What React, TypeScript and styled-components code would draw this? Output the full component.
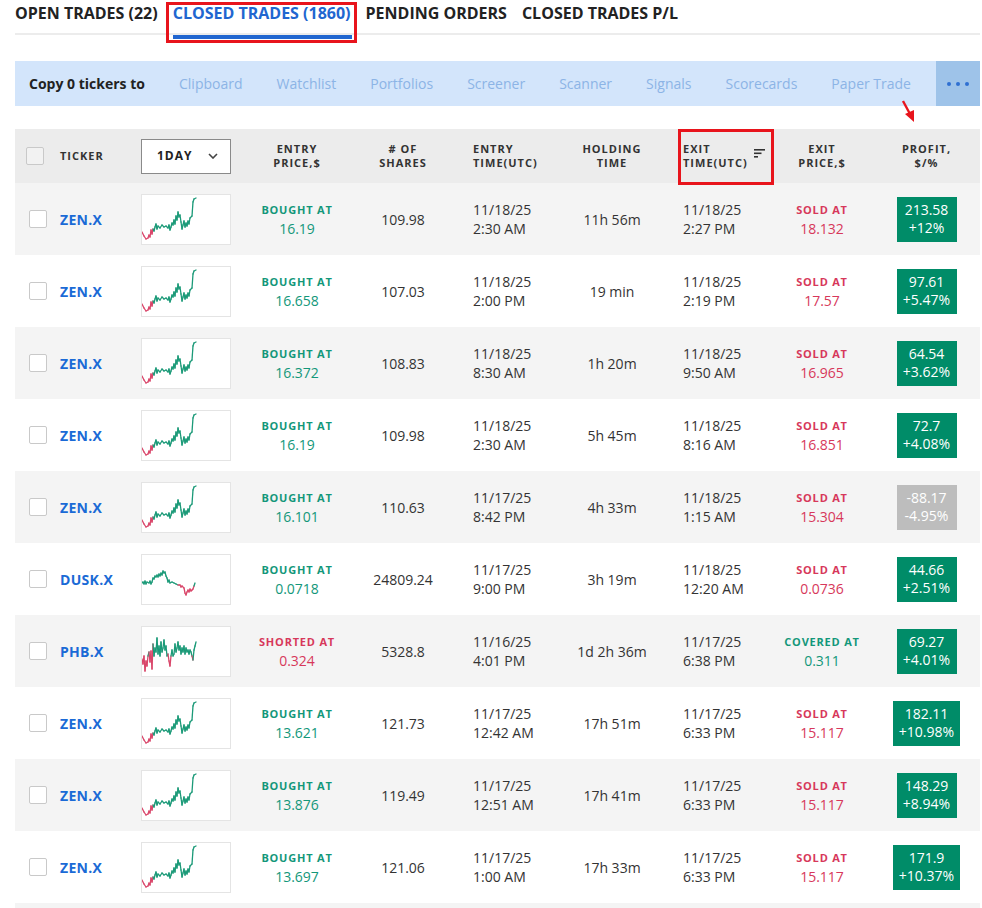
import React from 'react'
import styled, { createGlobalStyle } from 'styled-components'

const GlobalStyle = createGlobalStyle`
    body {
        margin: 0;
        background: #fff;
        font-family: "Open Sans", "Noto Sans", sans-serif;
        color: #333;
    }
`

const green = '#13977a'
const red = '#d7385b'
const blue = '#1a6ad6'

const Page = styled.div`
    width: 965px;
    padding: 0 0 0 15px;
    overflow: hidden;
    height: 908px;
    position: relative;
`

const TabBar = styled.nav`
    display: flex;
    gap: 15px;
    height: 33px;
    border-bottom: 2px solid #ececec;
`

const Tab = styled.div<{ active?: boolean }>`
    position: relative;
    padding-top: 2px;
    font-size: 16px;
    font-weight: 700;
    color: ${p => (p.active ? '#2166d0' : '#222')};
    white-space: nowrap;
    &::after {
        content: '';
        display: ${p => (p.active ? 'block' : 'none')};
        position: absolute;
        left: 0;
        right: -1px;
        bottom: -6px;
        height: 4px;
        background: #2166d0;
    }
`

const RedBox = styled.span<{ l: number; r: number; t: number; b: number }>`
    position: absolute;
    left: ${p => p.l}px;
    right: ${p => p.r}px;
    top: ${p => p.t}px;
    bottom: ${p => p.b}px;
    border: 3px solid #e8141c;
    pointer-events: none;
`

const CopyBar = styled.div`
    display: flex;
    align-items: center;
    margin-top: 26px;
    height: 45px;
    background: #d3e5fb;
`

const CopyLabel = styled.div`
    font-size: 14px;
    font-weight: 700;
    color: #222;
    padding-left: 14px;
    width: 150px;
`

const CopyLinks = styled.div`
    flex: 1;
    display: flex;
    justify-content: space-between;
    padding: 0 25px 0 0;
`

const CopyLink = styled.a`
    font-size: 14px;
    color: #8cb4e6;
    cursor: pointer;
`

const MoreButton = styled.div`
    width: 44px;
    height: 100%;
    background: #9ec3e9;
    display: flex;
    align-items: center;
    justify-content: center;
    gap: 5px;
    span {
        width: 4px;
        height: 4px;
        border-radius: 50%;
        background: #2f6fd1;
    }
`

const Table = styled.div`
    margin-top: 23px;
    position: relative;
`

const cols = '38px 88px 100px 112px 100px 110px 98px 110px 102px 107px'

const HeadRow = styled.div`
    display: grid;
    grid-template-columns: ${cols};
    height: 54px;
    background: #ececec;
    align-items: center;
`

const HeadCell = styled.div<{ left?: boolean; pad?: number }>`
    position: relative;
    height: 100%;
    display: flex;
    align-items: center;
    justify-content: ${p => (p.left ? 'flex-start' : 'center')};
    padding-left: ${p => p.pad || 0}px;
    text-align: ${p => (p.left ? 'left' : 'center')};
    font-size: 11px;
    font-weight: 700;
    letter-spacing: 1px;
    line-height: 14px;
    color: #333;
    box-sizing: border-box;
`

const Row = styled.div<{ shaded: boolean }>`
    display: grid;
    grid-template-columns: ${cols};
    height: 72px;
    align-items: center;
    background: ${p => (p.shaded ? '#f4f4f4' : '#fff')};
`

const Cell = styled.div<{ left?: boolean; pad?: number }>`
    text-align: ${p => (p.left ? 'left' : 'center')};
    padding-left: ${p => p.pad || 0}px;
    font-size: 14px;
    line-height: 19px;
    color: #333;
`

const CheckBox = styled.div<{ head?: boolean }>`
    width: 16px;
    height: 16px;
    border: 1px solid #c9c9c9;
    border-radius: 2px;
    background: ${p => (p.head ? '#f2f2f2' : '#fff')};
    margin-left: ${p => (p.head ? 11 : 14)}px;
`

const Ticker = styled.a`
    font-size: 14px;
    font-weight: 700;
    color: ${blue};
    padding-left: 7px;
    letter-spacing: 0.3px;
`

const HeadLabel = styled.span`
    padding-left: 7px;
`

const RangeSelect = styled.div`
    width: 90px;
    height: 35px;
    box-sizing: border-box;
    border: 1px solid #8a8a8a;
    background: #fff;
    display: flex;
    align-items: center;
    justify-content: space-between;
    padding: 0 12px 0 15px;
    font-size: 12px;
    font-weight: 700;
    color: #222;
`

const ChartBox = styled.div`
    width: 90px;
    height: 51px;
    box-sizing: border-box;
    border: 1px solid #e4e4e4;
    background: #fff;
    svg {
        display: block;
    }
`

const Tag = styled.div<{ color: string }>`
    font-size: 11px;
    font-weight: 700;
    letter-spacing: 0.8px;
    color: ${p => p.color};
    line-height: 18px;
`

const Price = styled.div<{ color: string }>`
    font-size: 14px;
    color: ${p => p.color};
    line-height: 19px;
`

const Badge = styled.div<{ loss?: boolean }>`
    display: inline-flex;
    flex-direction: column;
    justify-content: center;
    min-width: 60px;
    height: 45px;
    padding: 0 6px;
    box-sizing: border-box;
    background: ${p => (p.loss ? '#bdbdbd' : '#008c68')};
    color: #fff;
    font-size: 14px;
    line-height: 18px;
    text-align: center;
`

const Arrow = styled.svg`
    position: absolute;
    left: 899px;
    top: 99px;
`

type Series = number[][]

const zen: Series = [[1,38],[3,42],[5,45],[7,44],[8,41],[9,43],[10,36],[11,40],[12,35],[13,37],[14,33],[15,30],[16,35],[17,32],[19,34],[21,31],[23,33],[25,32],[27,34],[28,31],[29,36],[30,33],[31,29],[32,31],[33,26],[34,30],[35,22],[36,26],[37,18],[38,23],[39,21],[40,28],[41,35],[42,31],[43,27],[44,33],[45,29],[46,32],[47,27],[48,30],[49,24],[51,22],[52,8],[53,5],[55,4]]
const dusk: Series = [[1,29],[2,28],[3,30],[4,27],[5,30],[6,28],[8,29],[9,27],[10,30],[11,28],[12,24],[13,25],[14,22],[15,23],[16,21],[17,23],[18,20],[19,22],[20,19],[21,21],[22,17],[23,19],[24,18],[25,22],[26,24],[27,28],[28,26],[29,29],[31,28],[33,29],[35,30],[37,31],[39,31],[40,33],[41,32],[43,34],[44,39],[45,41],[46,38],[47,36],[48,38],[49,35],[50,37],[51,36],[52,35],[53,32],[54,29]]
const phb: Series = [[1,33],[2,38],[3,30],[4,45],[5,35],[6,40],[7,30],[8,26],[9,36],[10,25],[11,43],[12,18],[13,30],[14,22],[15,26],[16,12],[17,28],[18,20],[19,30],[20,16],[21,26],[22,22],[23,14],[24,24],[25,20],[26,30],[27,28],[28,35],[29,40],[30,30],[31,24],[32,30],[33,28],[34,18],[35,26],[36,22],[37,16],[38,24],[39,20],[40,28],[41,22],[42,26],[43,20],[44,28],[45,22],[46,26],[47,24],[48,28],[49,24],[50,26],[51,30],[52,34],[53,24],[54,20],[55,16]]

const Spark: React.FC<{ data: Series; level: number }> = ({ data, level }) => (
    <svg width="88" height="49" viewBox="1 1 88 49">
        {data.slice(1).map((p, i) => {
            const prev = data[i]
            const below = (prev[1] + p[1]) / 2 > level
            return (
                <line
                    key={i}
                    x1={prev[0]}
                    y1={prev[1]}
                    x2={p[0]}
                    y2={p[1]}
                    stroke={below ? '#d9466a' : '#1b9a78'}
                    strokeWidth="1.3"
                    strokeLinecap="round"
                />
            )
        })}
    </svg>
)

interface Trade {
    ticker: string
    chart: Series
    level: number
    short?: boolean
    entry: string
    shares: string
    entryDate: string
    entryTime: string
    holding: string
    exitDate: string
    exitTime: string
    exit: string
    profit: string
    pct: string
    loss?: boolean
}

const trades: Trade[] = [
    { ticker: 'ZEN.X', chart: zen, level: 36.5, entry: '16.19', shares: '109.98', entryDate: '11/18/25', entryTime: '2:30 AM', holding: '11h 56m', exitDate: '11/18/25', exitTime: '2:27 PM', exit: '18.132', profit: '213.58', pct: '+12%' },
    { ticker: 'ZEN.X', chart: zen, level: 36.5, entry: '16.658', shares: '107.03', entryDate: '11/18/25', entryTime: '2:00 PM', holding: '19 min', exitDate: '11/18/25', exitTime: '2:19 PM', exit: '17.57', profit: '97.61', pct: '+5.47%' },
    { ticker: 'ZEN.X', chart: zen, level: 36.5, entry: '16.372', shares: '108.83', entryDate: '11/18/25', entryTime: '8:30 AM', holding: '1h 20m', exitDate: '11/18/25', exitTime: '9:50 AM', exit: '16.965', profit: '64.54', pct: '+3.62%' },
    { ticker: 'ZEN.X', chart: zen, level: 36.5, entry: '16.19', shares: '109.98', entryDate: '11/18/25', entryTime: '2:30 AM', holding: '5h 45m', exitDate: '11/18/25', exitTime: '8:16 AM', exit: '16.851', profit: '72.7', pct: '+4.08%' },
    { ticker: 'ZEN.X', chart: zen, level: 36.5, entry: '16.101', shares: '110.63', entryDate: '11/17/25', entryTime: '8:42 PM', holding: '4h 33m', exitDate: '11/18/25', exitTime: '1:15 AM', exit: '15.304', profit: '-88.17', pct: '-4.95%', loss: true },
    { ticker: 'DUSK.X', chart: dusk, level: 30.5, entry: '0.0718', shares: '24809.24', entryDate: '11/17/25', entryTime: '9:00 PM', holding: '3h 19m', exitDate: '11/18/25', exitTime: '12:20 AM', exit: '0.0736', profit: '44.66', pct: '+2.51%' },
    { ticker: 'PHB.X', chart: phb, level: 30, short: true, entry: '0.324', shares: '5328.8', entryDate: '11/16/25', entryTime: '4:01 PM', holding: '1d 2h 36m', exitDate: '11/17/25', exitTime: '6:38 PM', exit: '0.311', profit: '69.27', pct: '+4.01%' },
    { ticker: 'ZEN.X', chart: zen, level: 36.5, entry: '13.621', shares: '121.73', entryDate: '11/17/25', entryTime: '12:42 AM', holding: '17h 51m', exitDate: '11/17/25', exitTime: '6:33 PM', exit: '15.117', profit: '182.11', pct: '+10.98%' },
    { ticker: 'ZEN.X', chart: zen, level: 36.5, entry: '13.876', shares: '119.49', entryDate: '11/17/25', entryTime: '12:51 AM', holding: '17h 41m', exitDate: '11/17/25', exitTime: '6:33 PM', exit: '15.117', profit: '148.29', pct: '+8.94%' },
    { ticker: 'ZEN.X', chart: zen, level: 36.5, entry: '13.697', shares: '121.06', entryDate: '11/17/25', entryTime: '1:00 AM', holding: '17h 33m', exitDate: '11/17/25', exitTime: '6:33 PM', exit: '15.117', profit: '171.9', pct: '+10.37%' },
]

const copyTargets = ['Clipboard', 'Watchlist', 'Portfolios', 'Screener', 'Scanner', 'Signals', 'Scorecards', 'Paper Trade']

export default function App() {
    return (
        <>
            <GlobalStyle />
            <Page>
                <TabBar>
                    <Tab>OPEN TRADES (22)</Tab>
                    <Tab active>
                        CLOSED TRADES (1860)
                        <RedBox l={-7} r={-6} t={2} b={-10} />
                    </Tab>
                    <Tab>PENDING ORDERS</Tab>
                    <Tab>CLOSED TRADES P/L</Tab>
                </TabBar>

                <CopyBar>
                    <CopyLabel>Copy 0 tickers to</CopyLabel>
                    <CopyLinks>
                        {copyTargets.map(t => (
                            <CopyLink key={t}>{t}</CopyLink>
                        ))}
                    </CopyLinks>
                    <MoreButton>
                        <span />
                        <span />
                        <span />
                    </MoreButton>
                </CopyBar>

                <Arrow width="20" height="26" viewBox="0 0 20 26">
                    <line x1="4" y1="2" x2="11" y2="15" stroke="#e8141c" strokeWidth="2.4" />
                    <polygon points="6,15 15,11 15,23" fill="#e8141c" />
                </Arrow>

                <Table>
                    <HeadRow>
                        <HeadCell left>
                            <CheckBox head />
                        </HeadCell>
                        <HeadCell left>
                            <HeadLabel>TICKER</HeadLabel>
                        </HeadCell>
                        <HeadCell left>
                            <RangeSelect>
                                1DAY
                                <svg width="10" height="6" viewBox="0 0 10 6">
                                    <polyline points="1,1 5,5 9,1" fill="none" stroke="#444" strokeWidth="1.6" />
                                </svg>
                            </RangeSelect>
                        </HeadCell>
                        <HeadCell>ENTRY<br />PRICE,$</HeadCell>
                        <HeadCell># OF<br />SHARES</HeadCell>
                        <HeadCell left pad={20}>ENTRY<br />TIME(UTC)</HeadCell>
                        <HeadCell>HOLDING<br />TIME</HeadCell>
                        <HeadCell left pad={22}>
                            <span>EXIT<br />TIME(UTC)</span>
                            <svg width="12" height="9" viewBox="0 0 12 9" style={{ marginLeft: 6, marginTop: -6 }}>
                                <rect x="0" y="0" width="11" height="1.6" fill="#333" />
                                <rect x="0" y="3.5" width="7.5" height="1.6" fill="#333" />
                                <rect x="0" y="7" width="4" height="1.6" fill="#333" />
                            </svg>
                            <RedBox l={17} r={-3} t={0} b={-2} />
                        </HeadCell>
                        <HeadCell>EXIT<br />PRICE,$</HeadCell>
                        <HeadCell>PROFIT,<br />$/%</HeadCell>
                    </HeadRow>

                    {trades.map((t, i) => (
                        <Row key={i} shaded={i % 2 === 0}>
                            <div>
                                <CheckBox />
                            </div>
                            <Ticker>{t.ticker}</Ticker>
                            <ChartBox>
                                <Spark data={t.chart} level={t.level} />
                            </ChartBox>
                            <Cell>
                                <Tag color={t.short ? red : green}>{t.short ? 'SHORTED AT' : 'BOUGHT AT'}</Tag>
                                <Price color={t.short ? red : green}>{t.entry}</Price>
                            </Cell>
                            <Cell>{t.shares}</Cell>
                            <Cell left pad={20}>
                                {t.entryDate}
                                <br />
                                {t.entryTime}
                            </Cell>
                            <Cell>{t.holding}</Cell>
                            <Cell left pad={22}>
                                {t.exitDate}
                                <br />
                                {t.exitTime}
                            </Cell>
                            <Cell>
                                <Tag color={t.short ? green : red}>{t.short ? 'COVERED AT' : 'SOLD AT'}</Tag>
                                <Price color={t.short ? green : red}>{t.exit}</Price>
                            </Cell>
                            <Cell>
                                <Badge loss={t.loss}>
                                    <span>{t.profit}</span>
                                    <span>{t.pct}</span>
                                </Badge>
                            </Cell>
                        </Row>
                    ))}
                    <Row shaded />
                </Table>
            </Page>
        </>
    )
}
